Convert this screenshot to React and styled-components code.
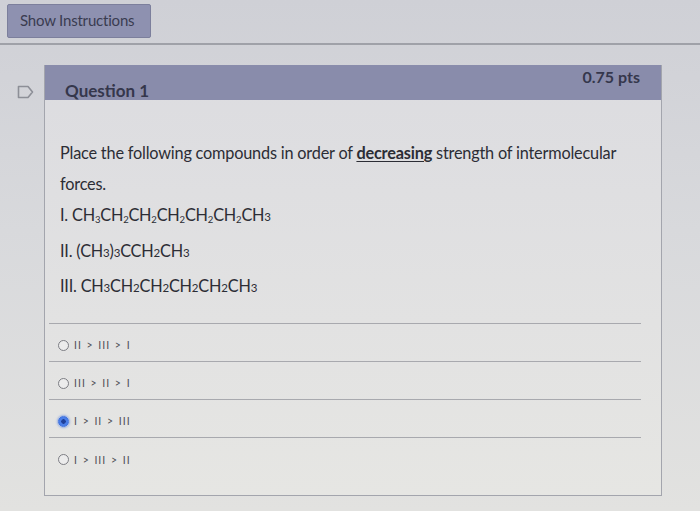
import React from "react";
import styled, { createGlobalStyle } from "styled-components";

const GlobalStyle = createGlobalStyle`
  html, body {
    margin: 0;
    padding: 0;
  }
  body {
    background: linear-gradient(180deg, #cfd0d6 0%, #d8d9dc 45%, #e2e2e0 100%);
    font-family: Lato, "Open Sans", "Liberation Sans", sans-serif;
    color: #2e2f38;
    width: 700px;
    height: 511px;
    overflow: hidden;
  }
`;

const TopBar = styled.div`
  padding: 4px 0 0 7px;
  height: 45px;
  box-sizing: border-box;
  border-bottom: 2px solid #9fa1a8;
`;

const InstructionsButton = styled.button`
  width: 144px;
  height: 34px;
  background: #8e91b0;
  border: 1px solid #7c7f9c;
  border-radius: 2px;
  font-family: inherit;
  font-size: 15px;
  color: #3a3c50;
  text-align: left;
  padding: 0 0 2px 12px;
  letter-spacing: -0.2px;
`;

const Main = styled.div`
  display: flex;
  padding-top: 20px;
`;

const FlagColumn = styled.div`
  width: 44px;
  display: flex;
  justify-content: center;
  padding: 20px 0 0 7px;
  box-sizing: border-box;
`;

const Card = styled.div`
  width: 618px;
  height: 431px;
  display: flex;
  flex-direction: column;
  background: linear-gradient(180deg, #dcdce0 0%, #e2e2e2 60%, #e6e6e3 100%);
  border-left: 1px solid #a3a5ad;
  border-right: 1px solid #a3a5ad;
  border-bottom: 1px solid #a3a5ad;
  box-sizing: border-box;
`;

const CardHeader = styled.div`
  height: 35px;
  background: #898cab;
  display: flex;
  justify-content: space-between;
  align-items: flex-start;
  padding: 0 21px 0 20px;
`;

const QuestionTitle = styled.div`
  font-size: 17px;
  font-weight: 700;
  color: #35374c;
  padding-top: 15px;
`;

const Points = styled.div`
  font-size: 16px;
  font-weight: 700;
  color: #35374c;
  padding-top: 2px;
`;

const CardBody = styled.div`
  padding: 37px 20px 0 15px;
`;

const Line = styled.p`
  margin: 0;
  font-size: 16.3px;
  line-height: 31px;
  color: #2c2d35;
  letter-spacing: -0.2px;
  white-space: nowrap;
`;

const Formula = styled(Line)`
  margin-top: ${(p) => p.$top || 0}px;
  sub {
    font-size: 9.5px;
    vertical-align: -2px;
  }
`;

const Small = styled.span`
  font-size: 11.5px;
`;

const Emph = styled.b`
  text-decoration: underline;
  text-underline-offset: 2px;
`;

const Answers = styled.div`
  margin: 20px 20px 0 4px;
  border-top: 1px solid #a8a9ae;
`;

const Answer = styled.div`
  height: 38px;
  box-sizing: border-box;
  display: flex;
  align-items: center;
  gap: 5px;
  padding: 5px 0 0 9px;
  border-bottom: ${(p) => (p.$last ? "none" : "1px solid #a8a9ae")};
  font-size: 10.5px;
  color: #505158;
  letter-spacing: 1px;
  word-spacing: 1px;
`;

const Radio = styled.span`
  width: 9px;
  height: 9px;
  border-radius: 50%;
  border: 1.5px solid #7d7e84;
  background: #ececec;
  box-sizing: content-box;
  ${(p) =>
    p.$checked &&
    `
    border-color: #3c6fe0;
    background: radial-gradient(circle, #1f3f9a 0 2px, #4a7ee8 2.5px 100%);
    box-shadow: 0 0 2px 1px rgba(70, 120, 230, 0.5);
  `}
`;

const Flag = () => (
  <svg width="17" height="14" viewBox="0 0 17 14">
    <path
      d="M1.5 1.5 H11 L15.5 7 L11 12.5 H1.5 Z"
      fill="none"
      stroke="#8d8f97"
      strokeWidth="1.6"
      strokeLinejoin="round"
    />
  </svg>
);

const answers = [
  { text: "II > III > I" },
  { text: "III > II > I" },
  { text: "I > II > III", checked: true },
  { text: "I > III > II" },
];

export default function App() {
  return (
    <>
      <GlobalStyle />
      <TopBar>
        <InstructionsButton>Show Instructions</InstructionsButton>
      </TopBar>
      <Main>
        <FlagColumn>
          <Flag />
        </FlagColumn>
        <Card>
          <CardHeader>
            <QuestionTitle>Question 1</QuestionTitle>
            <Points>0.75 pts</Points>
          </CardHeader>
          <CardBody>
            <Line>
              Place the following compounds in order of <Emph>decreasing</Emph>{" "}
              strength of intermolecular
            </Line>
            <Line>forces.</Line>
            <Formula>
              I. CH<sub>3</sub>CH<sub>2</sub>CH<sub>2</sub>CH<sub>2</sub>CH
              <sub>2</sub>CH<sub>2</sub>CH<Small>3</Small>
            </Formula>
            <Formula>
              II. (CH<Small>3</Small>)<Small>3</Small>CCH<Small>2</Small>CH
              <Small>3</Small>
            </Formula>
            <Formula $top={2}>
              III. CH<Small>3</Small>CH<Small>2</Small>CH<Small>2</Small>CH
              <Small>2</Small>CH<Small>2</Small>CH<Small>3</Small>
            </Formula>
          </CardBody>
          <Answers>
            {answers.map((a, i) => (
              <Answer key={a.text} $last={i === answers.length - 1}>
                <Radio $checked={a.checked} />
                {a.text}
              </Answer>
            ))}
          </Answers>
        </Card>
      </Main>
    </>
  );
}
